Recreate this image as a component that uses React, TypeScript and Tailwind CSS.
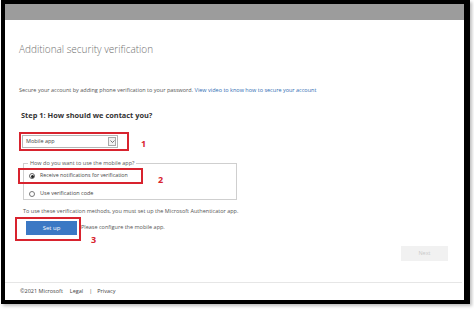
import React from "react";

const font = { fontFamily: '"Open Sans", "Noto Sans", Arial, sans-serif' };

function RedBox({ className }: { className: string }) {
  return <div className={"absolute border-2 border-[#d8232e] pointer-events-none " + className} />;
}

function Num({ n, className }: { n: string; className: string }) {
  return (
    <span className={"absolute text-[9px] font-bold leading-none text-[#d8232e] " + className}>{n}</span>
  );
}

export default function App() {
  return (
    <div className="w-[474px] h-[310px] bg-white" style={font}>
      <div className="ml-[1px] w-[469px] h-[304px] border-t-4 border-l-4 border-b-4 border-r-[6px] border-black flex flex-col bg-white shadow-[2px_2px_3px_rgba(0,0,0,0.25)]">
        <div className="h-[16px] bg-[#9c9c9c] shrink-0" />
        <div className="flex-1 flex flex-col pl-[14px] pr-[16px]">
          <div className="mt-[21px] h-[16px] text-[10px] leading-[16px] font-light text-[#6f6f6f]">
            Additional security verification
          </div>
          <div className="mt-[29px] h-[8px] text-[5.5px] leading-[8px] text-[#555]">
            Secure your account by adding phone verification to your password.{" "}
            <span className="text-[#2f6db3]">View video to know how to secure your account</span>
          </div>
          <div className="mt-[16px] ml-[2px] h-[10px] text-[7.4px] leading-[10px] font-bold text-[#333]">
            Step 1: How should we contact you?
          </div>
          <div className="relative mt-[15px] ml-[3px] w-[96px] h-[13px] border border-[#b5b5b5] bg-white flex items-center justify-between pl-[3px] pr-[1px]">
            <span className="text-[5.5px] leading-none text-[#444]">Mobile app</span>
            <span className="w-[8px] h-[9px] border border-[#a9a9a9] bg-[#f1f1f1] flex items-center justify-center">
              <svg width="5" height="3" viewBox="0 0 5 3">
                <path d="M0.5 0.5 L2.5 2.5 L4.5 0.5" fill="none" stroke="#555" strokeWidth="0.8" />
              </svg>
            </span>
            <RedBox className="left-[-4px] top-[-4px] w-[110px] h-[19px]" />
            <Num n="1" className="left-[118px] top-[3px]" />
          </div>
          <div className="relative mt-[15px] ml-[4px] w-[214px] h-[37px] border border-[#cfcfcf]">
            <span className="absolute left-[4px] top-[-4px] bg-white px-[2px] text-[5.5px] leading-[7px] text-[#555]">
              How do you want to use the mobile app?
            </span>
            <div className="absolute left-[5px] top-[9px] flex items-center gap-[5px]">
              <span className="w-[6px] h-[6px] rounded-full border border-[#666] flex items-center justify-center">
                <span className="w-[3px] h-[3px] rounded-full bg-[#222]" />
              </span>
              <span className="text-[5.3px] leading-none text-[#444]">Receive notifications for verification</span>
            </div>
            <div className="absolute left-[5px] top-[27px] flex items-center gap-[5px]">
              <span className="w-[6px] h-[6px] rounded-full border border-[#777]" />
              <span className="text-[5.5px] leading-none text-[#444]">Use verification code</span>
            </div>
            <RedBox className="left-[-6px] top-[4px] w-[125px] h-[16px]" />
            <Num n="2" className="left-[134px] top-[11px]" />
          </div>
          <div className="mt-[7px] ml-[4px] h-[8px] text-[5.5px] leading-[8px] text-[#555]">
            To use these verification methods, you must set up the Microsoft Authenticator app.
          </div>
          <div className="relative mt-[6px] ml-[7px] flex items-center h-[14px]">
            <div className="w-[51px] h-[14px] bg-[#3b78c4] text-white text-[6px] flex items-center justify-center">
              Set up
            </div>
            <span className="ml-[4px] text-[5.5px] leading-none text-[#555]">Please configure the mobile app.</span>
            <RedBox className="left-[-11px] top-[-4px] w-[66px] h-[24px]" />
            <Num n="3" className="left-[65px] top-[14px]" />
          </div>
          <div className="mt-[11px] self-end w-[47px] h-[15px] bg-[#f1f1f1] text-[#c9c9c9] text-[5.5px] flex items-center justify-center">
            Next
          </div>
        </div>
        <div className="h-[18px] shrink-0 border-t border-[#e6e6e6] mr-[2px] flex items-center pl-[15px] text-[5.5px] text-[#444]">
          <span>©2021 Microsoft</span>
          <span className="ml-[7px]">Legal</span>
          <span className="ml-[6px]">|</span>
          <span className="ml-[5px]">Privacy</span>
        </div>
      </div>
    </div>
  );
}
